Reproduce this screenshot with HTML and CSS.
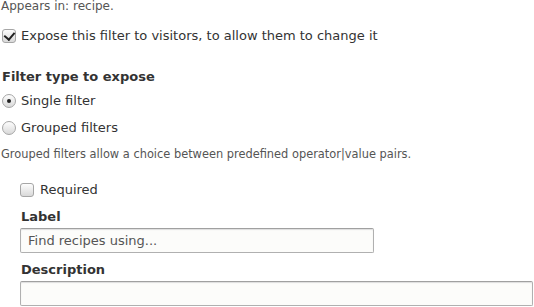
FILE: index.html
```html
<!DOCTYPE html>
<html>
<head>
<meta charset="utf-8">
<link rel="stylesheet" href="styles.css">
</head>
<body>
<div class="page">
  <p class="appears">Appears in: recipe.</p>
  <label class="check expose"><input type="checkbox" class="cb" checked> <span>Expose this filter to visitors, to allow them to change it</span></label>
  <div class="group">
    <div class="heading">Filter type to expose</div>
    <label class="radio-row"><input type="radio" name="t" class="rb" checked> <span>Single filter</span></label>
    <label class="radio-row"><input type="radio" name="t" class="rb"> <span>Grouped filters</span></label>
    <p class="desc">Grouped filters allow a choice between predefined operator|value pairs.</p>
  </div>
  <div class="sub">
    <label class="check required"><input type="checkbox" class="cb"> <span>Required</span></label>
    <div class="heading">Label</div>
    <input class="text short" type="text" value="Find recipes using...">
    <div class="heading">Description</div>
    <input class="text long" type="text" value="">
  </div>
</div>
</body>
</html>
```
FILE: styles.css
```css
html, body { margin: 0; padding: 0; background: #fff; }
body { font-family: "DejaVu Sans", Verdana, sans-serif; font-size: 13px; color: #333; }
.page { padding: 0 0 0 1px; }
.appears { margin: -1px 0 0 0; font-size: 12px; line-height: 14px; color: #555; }
.check, .radio-row { display: flex; align-items: center; gap: 5px; line-height: 16px; }
.expose { margin-top: 15px; padding-left: 1px; }
.cb, .rb { appearance: none; -webkit-appearance: none; margin: 0; width: 14px; height: 14px; border: 1px solid #a6a6a6; background: linear-gradient(#fdfdfd, #d9d9d9); box-sizing: border-box; position: relative; flex: none; }
.cb { border-radius: 3px; }
.rb { border-radius: 50%; }
.cb:checked::after { content: ""; position: absolute; left: 3px; top: 0px; width: 5px; height: 8px; border: solid #222; border-width: 0 2.5px 2.5px 0; transform: rotate(40deg); }
.rb:checked::after { content: ""; position: absolute; left: 4px; top: 4px; width: 4px; height: 4px; border-radius: 50%; background: #222; }
.group { margin-top: 25px; }
.heading { font-weight: bold; line-height: 16px; padding-left: 1px; }
.radio-row { margin-top: 8px; padding-left: 1px; }
.radio-row + .radio-row { margin-top: 11px; }
.desc { margin: 11px 0 0 0; font-size: 11.4px; line-height: 14px; color: #555; }
.sub { padding-left: 19px; margin-top: 21px; }
.required { margin-bottom: 11px; gap: 6px; }
.text { display: block; box-sizing: border-box; height: 25px; margin: 3px 0 9px 0; padding: 0 7px; border: 1px solid #b0b0b0; border-top-color: #a0a0a0; border-radius: 2px; background: #fcfcfa; box-shadow: inset 0 1px 1px #ddd; font-family: "DejaVu Sans", Verdana, sans-serif; font-size: 13px; color: #555; }
.short { width: 354px; }
.long { width: 513px; }
```
